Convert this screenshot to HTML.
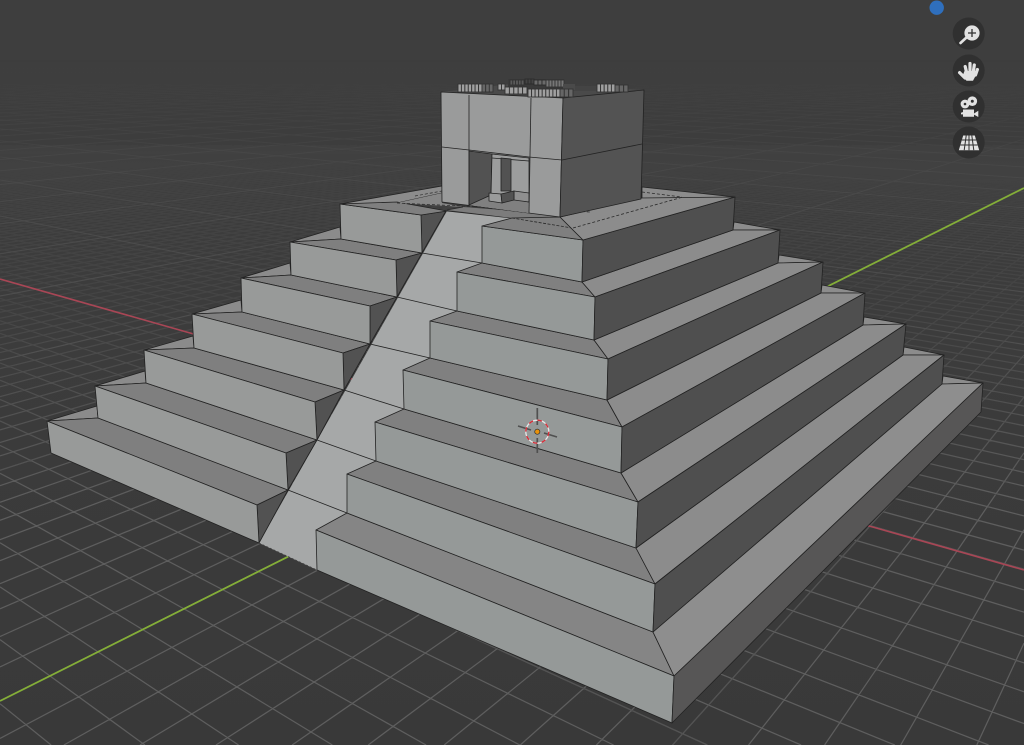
<!DOCTYPE html>
<html lang="en">
<head>
<meta charset="utf-8">
<title>3D Viewport</title>
<style>
html,body{margin:0;padding:0;background:#3c3c3c;width:1024px;height:745px;overflow:hidden}
svg{display:block;position:absolute;left:0;top:0}
</style>
</head>
<body>
<svg id="s" xmlns="http://www.w3.org/2000/svg" width="1024" height="745" viewBox="0 0 1024 745"></svg>
<script>
var o='';
o+='<defs><linearGradient id="bg" x1="0" y1="0" x2="0" y2="1"><stop offset="0" stop-color="#3e3e3e"/><stop offset="1" stop-color="#393939"/></linearGradient>'+
'<linearGradient id="mg" gradientUnits="userSpaceOnUse" x1="0" y1="140" x2="0" y2="500"><stop offset="0" stop-color="#fff" stop-opacity="0.1"/><stop offset=".45" stop-color="#fff" stop-opacity="0.28"/><stop offset=".72" stop-color="#fff" stop-opacity="0.6"/><stop offset="1" stop-color="#fff" stop-opacity="1"/></linearGradient>'+
'<mask id="m" maskUnits="userSpaceOnUse" x="0" y="0" width="1024" height="745"><rect width="1024" height="745" fill="url(#mg)"/></mask>'+
'<linearGradient id="mg2" gradientUnits="userSpaceOnUse" x1="0" y1="60" x2="0" y2="400"><stop offset="0" stop-color="#fff" stop-opacity="0"/><stop offset=".35" stop-color="#fff" stop-opacity=".45"/><stop offset="1" stop-color="#fff" stop-opacity="1"/></linearGradient>'+
'<mask id="m2" maskUnits="userSpaceOnUse" x="0" y="0" width="1024" height="745"><rect width="1024" height="745" fill="url(#mg2)"/></mask>'+
'</defs>';
o+='<rect width="1024" height="745" fill="url(#bg)"/>';
var A=.0198,B=.0244,W=1024,H=745;
function P(a,w){var d=1+a+w;return [(537.5-810*a+1299*w)/d,(431.5+50*(a+w))/d];}
function seg(p,q){
 var t0=0,t1=1,dx=q[0]-p[0],dy=q[1]-p[1],c=[[-dx,p[0]],[dx,W-p[0]],[-dy,p[1]],[dy,H-p[1]]];
 for(var i=0;i<4;i++){var a=c[i][0],b=c[i][1];
  if(a===0){if(b<0)return '';}
  else{var r=b/a;if(a<0){if(r>t0)t0=r;}else{if(r<t1)t1=r;}}
 }
 if(t0>=t1)return '';
 return 'M'+(p[0]+t0*dx).toFixed(1)+' '+(p[1]+t0*dy).toFixed(1)+'L'+(p[0]+t1*dx).toFixed(1)+' '+(p[1]+t1*dy).toFixed(1);
}
var d1='',d2='',u,a,w;
for(u=-20;u<=120;u++){a=u*A;d1+=seg(P(a,-.55-a),P(a,3-a));}
for(u=-20;u<=125;u++){w=u*B;d1+=seg(P(-.55-w,w),P(3-w,w));}
for(u=-2;u<=190;u++){a=u*10*A;d2+=seg(P(a,Math.max(-.55-a,-.6)),P(a,60-a));}
for(u=-2;u<=215;u++){w=u*10*B;d2+=seg(P(Math.max(-.55-w,-.6),w),P(60-w,w));}
o+='<path d="'+d1+'" fill="none" stroke="#5e5e5e" stroke-width="1.25" mask="url(#m)"/>';
o+='<path d="'+d2+'" fill="none" stroke="#525252" stroke-width=".9" mask="url(#m2)"/>';
o+='<path d="M0 279 L1024 570" stroke="#a84655" stroke-width="1.6" fill="none"/>';
o+='<path d="M0 701 L1024 188" stroke="#84ae38" stroke-width="1.8" fill="none"/>';

function poly(p,f,s){var t='';for(var i=0;i<p.length;i++){t+=p[i][0]+','+p[i][1]+' ';}
 return '<polygon points="'+t+'" fill="'+f+'"'+(s===0?'':' stroke="#222" stroke-width=".8" stroke-linejoin="round"')+'/>';}
function ln(x1,y1,x2,y2,c,sw,da){return '<line x1="'+x1+'" y1="'+y1+'" x2="'+x2+'" y2="'+y2+'" stroke="'+(c||'#222')+'" stroke-width="'+(sw||.8)+'"'+(da?' stroke-dasharray="'+da+'"':'')+'/>';}
var T=[null,
{L:[47,421],l:[51,453],M:[257,505],m:[259,543],S:[316,530],s:[317,570],F:[674,676],f:[672,723],R:[983,383],r:[981,412]},
{L:[95,386],l:[98,418],M:[286,453],m:[288,490],S:[347,474],s:[347,513],F:[655,584],f:[653,632],R:[944,355],r:[942,384]},
{L:[144,350],l:[146,383],M:[315,402],m:[317,440],S:[375,422],s:[376,461],F:[638,502],f:[636,548],R:[906,324],r:[903,355]},
{L:[192,314],l:[194,348],M:[343,353],m:[344,390],S:[403,370],s:[404,409],F:[622,427],f:[621,473],R:[865,293],r:[863,325]},
{L:[241,278],l:[242,312],M:[370,306],m:[370,344],S:[430,321],s:[430,358],F:[608,359],f:[607,400],R:[823,262],r:[821,293]},
{L:[290,242],l:[291,275],M:[396,260],m:[397,297],S:[457,272],s:[457,311],F:[595,297],f:[594,340],R:[780,230],r:[778,263]},
{L:[340,204],l:[341,239],M:[421,215],m:[422,253],S:[482,226],s:[482,263],F:[583,240],f:[582,282],R:[735,197],r:[733,230]}];

// back of platform
o+=poly([[340,204],[442,186],[442,193],[397,203]],'#8c8c8c');
o+=poly([[642,187],[735,197],[642,210]],'#8c8c8c');
// ramp
o+=poly([[259,543],[317,570],[512,225],[512,218],[447,211]],'#a6a8a8',0);
o+=ln(259,543,317,570,'#444',.8,'2 2');
var i;
for(i=2;i<=7;i++){o+=ln(T[i].m[0],T[i].m[1],T[i].s[0],T[i].s[1]);}
o+=ln(447,211,512,218);
// tiers bottom-up
for(i=1;i<=7;i++){var t=T[i],n=T[i+1];
 if(n){
  o+=poly([t.L,[n.l[0]-1,n.l[1]-12],n.l],'#8b8b8b');
  o+=poly([t.R,[n.r[0]+1,n.r[1]-8],n.r],'#8c8c8c');
  o+=poly([t.L,n.l,n.m,t.M],'#7f7f7f');
  o+=poly([t.S,n.s,n.f,t.F],i==1?'#858585':'#808080');
  o+=poly([t.F,n.f,n.r,t.R],i==1?'#8e8e8e':'#8c8c8c');
 }
 var ch=n?n.m:[446,211];
 o+=poly([t.M,t.m,ch],'#525252');
 o+=poly([t.L,t.l,t.m,t.M],'#989a99');
 o+=poly([t.S,t.s,t.f,t.F],'#959998');
 o+=poly([t.F,t.f,t.r,t.R],i==1?'#575656':'#4f4f4f');
}
// platform top
o+=poly([[340,204],[397,202],[447,211],[421,215]],'#7f7f7f');
o+=poly([[397,203],[442,193],[442,203],[463,207]],'#878787',0);
o+=poly([[447,210],[463,207],[529,212],[560,217],[512,218]],'#7c7c7c',0);
o+=poly([[482,226],[512,218],[560,217],[583,240]],'#7f7f7f');
o+=ln(512,218,572,228,'#2a2a2a',.8,'3 1.5');
o+=poly([[583,240],[560,217],[640,198],[735,197]],'#8c8c8c');
o+=ln(573,228,683,197,'#2a2a2a',.8,'3 2');
o+=ln(642,192,682,197,'#2a2a2a',.8,'3 2');
o+=ln(397,203,590,212,'#2a2a2a',.7,'3 2');
o+=ln(415,196,442,191,'#2a2a2a',.7,'3 2');
o+=ln(447,210,463,207,'#2a2a2a',.7);
// roof base
o+=poly([[441,92],[520,83],[644,90],[563,98]],'#4a4a4a',0);
// temple
o+=poly([[441,92],[563,98],[560,217],[442,202]],'#9a9b9b');
o+=poly([[563,98],[644,90],[641,199],[560,217]],'#535353');
// doorway
o+=poly([[469,151],[529,158],[529,213],[469,205]],'#9a9b9b',0);
o+=poly([[469,205],[491,195],[529,202],[529,213]],'#808080',0);
o+=poly([[469,151],[492,154],[491,195],[469,205]],'#525252');
o+=poly([[492,154],[529,158],[529,202],[491,195]],'#9c9d9d');
o+=ln(492,158,529,161);
o+=poly([[501,158],[511,159],[511,191],[501,191]],'#525252');
o+=poly([[514,191],[529,193],[529,202],[514,200]],'#8f8f8f');
o+=poly([[489,193],[501,194],[502,203],[489,201]],'#9a9b9b');
o+=poly([[501,194],[514,191],[514,200],[502,203]],'#525252');
o+=ln(442,147,469,150)+ln(469,150,529,157)+ln(529,157,562,160)+ln(562,160,642,144);
o+=ln(469,95,469,205)+ln(531,98,529,213);
// roof details
function stripe(x,y,w,h,n,c1,c2){var r='',sw=w/n;for(var k=0;k<n;k++){r+='<rect x="'+(x+k*sw).toFixed(1)+'" y="'+y+'" width="'+sw.toFixed(1)+'" height="'+h+'" fill="'+(c1)+'" stroke="'+c2+'" stroke-width=".9"/>';}return r;}
o+='<rect x="508" y="79" width="56" height="10" fill="#3a3a3a"/>';
o+=stripe(510,80,14,5,5,'#5a5a5a','#333')+stripe(525,79,9,5,3,'#444','#2c2c2c')+stripe(534,80,12,5,3,'#6a6a6a','#2c2c2c')+stripe(546,80,18,7,6,'#777','#333');
o+='<rect x="573" y="86" width="25" height="5" fill="#444"/><rect x="563" y="84" width="12" height="6" fill="#4a4a4a"/>';
o+=stripe(458,84,24,8,7,'#a0a0a0','#333')+stripe(482,84,11,8,3,'#666','#333');
o+=stripe(498,84,7,6,2,'#a0a0a0','#333')+stripe(505,87,22,7,5,'#a0a0a0','#333');
o+=stripe(528,89,32,8,9,'#a0a0a0','#333')+stripe(560,89,13,8,3,'#666','#333');
o+=stripe(597,84,18,8,5,'#a0a0a0','#333')+stripe(615,85,13,7,3,'#666','#333');
// 3D cursor
o+='<g fill="none" stroke="#505050" stroke-width="1.7"><line x1="537.3" y1="408" x2="537.3" y2="425"/><line x1="537.3" y1="438" x2="537.3" y2="453"/><line x1="518" y1="426" x2="531" y2="430"/><line x1="544" y1="433" x2="557" y2="437"/></g>';
o+='<circle cx="537.3" cy="431.7" r="11.5" fill="none" stroke="#e8e8e8" stroke-width="1.3"/>';
o+='<circle cx="537.3" cy="431.7" r="11.5" fill="none" stroke="#d92a35" stroke-width="1.3" stroke-dasharray="4.5 4.5"/>';
o+='<circle cx="537.3" cy="431.7" r="2.6" fill="#e8920c" stroke="#333" stroke-width=".7"/>';
// nav gizmos
o+='<circle cx="936.7" cy="7.7" r="7.2" fill="#2f6fbd"/>';
var cs=[33.5,70.5,106.5,142.5];
for(i=0;i<4;i++){o+='<circle cx="968.7" cy="'+cs[i]+'" r="16" fill="#303030"/>';}
// magnifier
o+='<line x1="960.5" y1="43" x2="967" y2="37" stroke="#e2e2e2" stroke-width="2.6" stroke-linecap="round"/>';
o+='<circle cx="972" cy="33" r="7.6" fill="#e2e2e2"/>';
o+='<path d="M972 29v8M968 33h8" stroke="#303030" stroke-width="1.3" fill="none"/>';
// hand
o+='<g stroke="#e2e2e2" stroke-width="3.2" stroke-linecap="round" fill="none"><path d="M966.5 72 L965.2 66.5"/><path d="M970 71 L970 63.5"/><path d="M973.3 72 L974.3 65"/><path d="M975.5 75 L977.4 69.5"/><path d="M965 78 L959.6 72.6"/></g>';
o+='<path d="M964.5 71 H976.8 L975.5 76 L973 80.8 H966.5 L962.5 76 Z" fill="#e2e2e2"/>';
// camera
o+='<circle cx="965" cy="104" r="4.4" fill="#e2e2e2"/><circle cx="972.3" cy="101.2" r="4.8" fill="#e2e2e2"/><circle cx="965" cy="104" r="1.3" fill="#303030"/><circle cx="972.3" cy="101.2" r="1.5" fill="#303030"/>';
o+='<path d="M963 109.5 H974 V116.8 H963 Z M974 113.5 L978.3 110.8 V117 L974 114.6 Z M963 112 L961 112.8 V114.4 L963 114.4 Z" fill="#e2e2e2"/>';
// perspective grid icon
o+='<path d="M963.2 135.5 H974.8 L979.2 150.2 H958.8 Z" fill="#e2e2e2"/>';
o+='<path d="M961.8 140 H976.2 M960.3 145 H977.7 M966.2 135.5 L964.2 150.2 M969 135.5 L969 150.2 M971.8 135.5 L973.8 150.2" stroke="#303030" stroke-width="1" fill="none"/>';
document.getElementById('s').innerHTML=o;
</script>
</body>
</html>
